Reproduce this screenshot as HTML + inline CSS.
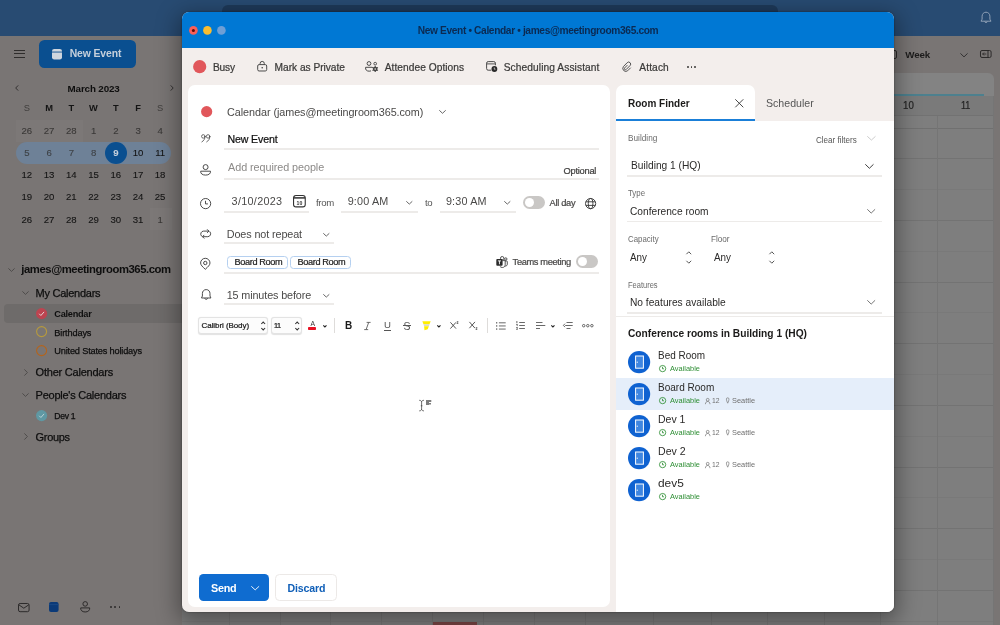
<!DOCTYPE html>
<html>
<head>
<meta charset="utf-8">
<title>New Event</title>
<style>
*{box-sizing:border-box;margin:0;padding:0}
html,body{width:1000px;height:625px;overflow:hidden;background:#797574;font-family:"Liberation Sans",sans-serif;}
body{position:relative}
.a{position:absolute}
.t{position:absolute;white-space:nowrap;line-height:1}
.b{font-weight:bold}
svg{position:absolute;overflow:visible}
/* ---------- background app (dimmed) ---------- */
#topbar{left:0;top:0;width:1000px;height:36px;background:#284b72}
#search{left:222px;top:5px;width:556px;height:26px;border-radius:6px;background:#1e3a5a}
#side{left:0;top:36px;width:182px;height:589px;background:#797574}
#grid{left:182px;top:73px;width:812px;height:552px;background:#7e7e7e;border-top-right-radius:8px}
.dk{color:#0e0e0e;-webkit-text-stroke:0.25px #0e0e0e}
.b.dk{-webkit-text-stroke:0}
.dg{color:#3c3a39}
/* ---------- modal ---------- */
#shadow{left:182px;top:12px;width:712px;height:600px;border-radius:7px;box-shadow:0 6px 22px 4px rgba(0,0,0,.36),0 0 2px rgba(0,0,0,.45)}
#modal{left:182px;top:12px;width:712px;height:600px;border-radius:7px;background:#f3eeec;overflow:hidden}
#title{left:0;top:0;width:712px;height:36.2px;background:#0078d4}
#lp{left:6px;top:73px;width:422px;height:522px;background:#fff;border-radius:7px}
#rp{left:434px;top:109px;width:278px;height:491px;background:#fff}
#tab{left:434px;top:73px;width:139px;height:36px;background:#fff;border-radius:7px 7px 0 0}
.ul{position:absolute;height:1px;background:#e3e1df}
.tb{color:#3b3a39;font-size:10.2px}
.lbl{color:#6b6b6b;font-size:8.4px}
.val{color:#2b2a29;font-size:10.9px}
.fv{color:#4a4948;font-size:10.8px}
</style>
</head>
<body>
<div id="all" class="a" style="left:0;top:0;width:1000px;height:625px;overflow:hidden;will-change:transform">
<!-- ======= dimmed background app ======= -->
<div id="topbar" class="a"></div>
<div id="search" class="a"></div>
<div id="side" class="a"></div>
<div id="grid" class="a"></div>
<svg style="left:980px;top:11px;" width="12" height="13" viewBox="0 0 12 13"><path d="M6 1.2c-2.3 0-3.9 1.8-3.9 4v3L1 10.2h10L9.9 8.2v-3c0-2.2-1.6-4-3.9-4z" fill="none" stroke="#8fa0b6" stroke-width="1"/><path d="M4.6 10.6a1.5 1.5 0 0 0 2.8 0" fill="none" stroke="#8fa0b6" stroke-width="1"/></svg><div class="a" style="left:14px;top:49.7px;width:11px;height:1px;background:#2f2d2c"></div><div class="a" style="left:14px;top:53.4px;width:11px;height:1px;background:#2f2d2c"></div><div class="a" style="left:14px;top:57.0px;width:11px;height:1px;background:#2f2d2c"></div><div class="a" style="left:39px;top:40px;width:96.5px;height:28px;background:#0a4f90;border-radius:5.5px"></div><svg style="left:52px;top:49px;" width="10" height="10.4" viewBox="0 0 10 10.4"><rect x="0" y="0" width="10" height="10.4" rx="2.2" fill="#cfd6de"/><rect x="0" y="2.6" width="10" height="0.9" fill="#0a4f90"/></svg><span class="t b" style="letter-spacing:-0.105px;left:69.7px;top:54.30px;transform:translateY(-50%);font-size:10.4px;color:#c5d0dc">New Event</span><span class="t b dk" style="letter-spacing:-0.138px;left:93.6px;top:88.60px;transform:translate(-50%,-50%);font-size:9.8px">March 2023</span><svg style="left:14.5px;top:85px;" width="4" height="6" viewBox="0 0 4 6"><path d="M3.2 0.4L0.7 3l2.5 2.6" fill="none" stroke="#2b2929" stroke-width="0.9"/></svg><svg style="left:169.5px;top:85px;" width="4" height="6" viewBox="0 0 4 6"><path d="M0.7 0.4L3.2 3 0.7 5.6" fill="none" stroke="#2b2929" stroke-width="0.9"/></svg><span class="t " style="left:26.8px;top:108.70px;transform:translate(-50%,-50%);font-size:9.3px;color:#3f3d3c">S</span><span class="t b" style="left:49px;top:108.70px;transform:translate(-50%,-50%);font-size:9.3px;color:#141414">M</span><span class="t b" style="left:71.3px;top:108.70px;transform:translate(-50%,-50%);font-size:9.3px;color:#141414">T</span><span class="t b" style="left:93.5px;top:108.70px;transform:translate(-50%,-50%);font-size:9.3px;color:#141414">W</span><span class="t b" style="left:115.8px;top:108.70px;transform:translate(-50%,-50%);font-size:9.3px;color:#141414">T</span><span class="t b" style="left:138px;top:108.70px;transform:translate(-50%,-50%);font-size:9.3px;color:#141414">F</span><span class="t " style="left:160.1px;top:108.70px;transform:translate(-50%,-50%);font-size:9.3px;color:#3f3d3c">S</span><div class="a" style="left:16.4px;top:119.5px;width:66.6px;height:22.3px;background:#7c7877"></div><div class="a" style="left:149.5px;top:208.4px;width:22px;height:22px;background:#7c7877"></div><div class="a" style="left:16.4px;top:141.8px;width:155px;height:22px;background:#6e8197;border-radius:11px"></div><div class="a" style="left:104.8px;top:141.8px;width:22px;height:22px;background:#0a4f90;border-radius:11px"></div><span class="t " style="left:26.8px;top:130.70px;transform:translate(-50%,-50%);font-size:9.6px;color:#3a3837;letter-spacing:-0.1px;-webkit-text-stroke:0.1px #3a3837">26</span><span class="t " style="left:49px;top:130.70px;transform:translate(-50%,-50%);font-size:9.6px;color:#3a3837;letter-spacing:-0.1px;-webkit-text-stroke:0.1px #3a3837">27</span><span class="t " style="left:71.3px;top:130.70px;transform:translate(-50%,-50%);font-size:9.6px;color:#3a3837;letter-spacing:-0.1px;-webkit-text-stroke:0.1px #3a3837">28</span><span class="t " style="left:93.5px;top:130.70px;transform:translate(-50%,-50%);font-size:9.6px;color:#3a3837;letter-spacing:-0.1px;-webkit-text-stroke:0.1px #3a3837">1</span><span class="t " style="left:115.8px;top:130.70px;transform:translate(-50%,-50%);font-size:9.6px;color:#3a3837;letter-spacing:-0.1px;-webkit-text-stroke:0.1px #3a3837">2</span><span class="t " style="left:138px;top:130.70px;transform:translate(-50%,-50%);font-size:9.6px;color:#3a3837;letter-spacing:-0.1px;-webkit-text-stroke:0.1px #3a3837">3</span><span class="t " style="left:160.1px;top:130.70px;transform:translate(-50%,-50%);font-size:9.6px;color:#3a3837;letter-spacing:-0.1px;-webkit-text-stroke:0.1px #3a3837">4</span><span class="t " style="left:26.8px;top:152.90px;transform:translate(-50%,-50%);font-size:9.6px;color:#3e4246;letter-spacing:-0.1px;-webkit-text-stroke:0.1px #3e4246">5</span><span class="t " style="left:49px;top:152.90px;transform:translate(-50%,-50%);font-size:9.6px;color:#3e4246;letter-spacing:-0.1px;-webkit-text-stroke:0.1px #3e4246">6</span><span class="t " style="left:71.3px;top:152.90px;transform:translate(-50%,-50%);font-size:9.6px;color:#3e4246;letter-spacing:-0.1px;-webkit-text-stroke:0.1px #3e4246">7</span><span class="t " style="left:93.5px;top:152.90px;transform:translate(-50%,-50%);font-size:9.6px;color:#3e4246;letter-spacing:-0.1px;-webkit-text-stroke:0.1px #3e4246">8</span><span class="t b" style="left:115.8px;top:152.90px;transform:translate(-50%,-50%);font-size:9.6px;color:#c5d0dc;letter-spacing:-0.1px;-webkit-text-stroke:0.1px #c5d0dc">9</span><span class="t " style="left:138px;top:152.90px;transform:translate(-50%,-50%);font-size:9.6px;color:#141414;letter-spacing:-0.1px;-webkit-text-stroke:0.1px #141414">10</span><span class="t " style="left:160.1px;top:152.90px;transform:translate(-50%,-50%);font-size:9.6px;color:#141414;letter-spacing:-0.1px;-webkit-text-stroke:0.1px #141414">11</span><span class="t " style="left:26.8px;top:175.10px;transform:translate(-50%,-50%);font-size:9.6px;color:#141414;letter-spacing:-0.1px;-webkit-text-stroke:0.1px #141414">12</span><span class="t " style="left:49px;top:175.10px;transform:translate(-50%,-50%);font-size:9.6px;color:#141414;letter-spacing:-0.1px;-webkit-text-stroke:0.1px #141414">13</span><span class="t " style="left:71.3px;top:175.10px;transform:translate(-50%,-50%);font-size:9.6px;color:#141414;letter-spacing:-0.1px;-webkit-text-stroke:0.1px #141414">14</span><span class="t " style="left:93.5px;top:175.10px;transform:translate(-50%,-50%);font-size:9.6px;color:#141414;letter-spacing:-0.1px;-webkit-text-stroke:0.1px #141414">15</span><span class="t " style="left:115.8px;top:175.10px;transform:translate(-50%,-50%);font-size:9.6px;color:#141414;letter-spacing:-0.1px;-webkit-text-stroke:0.1px #141414">16</span><span class="t " style="left:138px;top:175.10px;transform:translate(-50%,-50%);font-size:9.6px;color:#141414;letter-spacing:-0.1px;-webkit-text-stroke:0.1px #141414">17</span><span class="t " style="left:160.1px;top:175.10px;transform:translate(-50%,-50%);font-size:9.6px;color:#141414;letter-spacing:-0.1px;-webkit-text-stroke:0.1px #141414">18</span><span class="t " style="left:26.8px;top:197.40px;transform:translate(-50%,-50%);font-size:9.6px;color:#141414;letter-spacing:-0.1px;-webkit-text-stroke:0.1px #141414">19</span><span class="t " style="left:49px;top:197.40px;transform:translate(-50%,-50%);font-size:9.6px;color:#141414;letter-spacing:-0.1px;-webkit-text-stroke:0.1px #141414">20</span><span class="t " style="left:71.3px;top:197.40px;transform:translate(-50%,-50%);font-size:9.6px;color:#141414;letter-spacing:-0.1px;-webkit-text-stroke:0.1px #141414">21</span><span class="t " style="left:93.5px;top:197.40px;transform:translate(-50%,-50%);font-size:9.6px;color:#141414;letter-spacing:-0.1px;-webkit-text-stroke:0.1px #141414">22</span><span class="t " style="left:115.8px;top:197.40px;transform:translate(-50%,-50%);font-size:9.6px;color:#141414;letter-spacing:-0.1px;-webkit-text-stroke:0.1px #141414">23</span><span class="t " style="left:138px;top:197.40px;transform:translate(-50%,-50%);font-size:9.6px;color:#141414;letter-spacing:-0.1px;-webkit-text-stroke:0.1px #141414">24</span><span class="t " style="left:160.1px;top:197.40px;transform:translate(-50%,-50%);font-size:9.6px;color:#141414;letter-spacing:-0.1px;-webkit-text-stroke:0.1px #141414">25</span><span class="t " style="left:26.8px;top:219.60px;transform:translate(-50%,-50%);font-size:9.6px;color:#141414;letter-spacing:-0.1px;-webkit-text-stroke:0.1px #141414">26</span><span class="t " style="left:49px;top:219.60px;transform:translate(-50%,-50%);font-size:9.6px;color:#141414;letter-spacing:-0.1px;-webkit-text-stroke:0.1px #141414">27</span><span class="t " style="left:71.3px;top:219.60px;transform:translate(-50%,-50%);font-size:9.6px;color:#141414;letter-spacing:-0.1px;-webkit-text-stroke:0.1px #141414">28</span><span class="t " style="left:93.5px;top:219.60px;transform:translate(-50%,-50%);font-size:9.6px;color:#141414;letter-spacing:-0.1px;-webkit-text-stroke:0.1px #141414">29</span><span class="t " style="left:115.8px;top:219.60px;transform:translate(-50%,-50%);font-size:9.6px;color:#141414;letter-spacing:-0.1px;-webkit-text-stroke:0.1px #141414">30</span><span class="t " style="left:138px;top:219.60px;transform:translate(-50%,-50%);font-size:9.6px;color:#141414;letter-spacing:-0.1px;-webkit-text-stroke:0.1px #141414">31</span><span class="t " style="left:160.1px;top:219.60px;transform:translate(-50%,-50%);font-size:9.6px;color:#3a3837;letter-spacing:-0.1px;-webkit-text-stroke:0.1px #3a3837">1</span><svg style="left:7.6px;top:268.2px;" width="7" height="4" viewBox="0 0 7 4"><path d="M0.4 0.4L3.5 3.4 6.6 0.4" fill="none" stroke="#4a4746" stroke-width="0.9"/></svg><span class="t b dk" style="letter-spacing:-0.435px;left:21.3px;top:270.00px;transform:translateY(-50%);font-size:11.3px">james@meetingroom365.com</span><svg style="left:21.5px;top:291px;" width="7" height="4" viewBox="0 0 7 4"><path d="M0.4 0.4L3.5 3.4 6.6 0.4" fill="none" stroke="#4a4746" stroke-width="0.9"/></svg><span class="t dk" style="letter-spacing:-0.263px;left:35.6px;top:292.80px;transform:translateY(-50%);font-size:11px">My Calendars</span><div class="a" style="left:4px;top:304.1px;width:178px;height:18.8px;background:#6e6b6a;border-radius:4px 0 0 4px"></div><svg style="left:36px;top:307.7px;" width="11.2" height="11.2" viewBox="0 0 11.2 11.2"><circle cx="5.6" cy="5.6" r="5.6" fill="#bd4450"/><path d="M3.2 5.8l1.7 1.7 3.2-3.6" fill="none" stroke="#e6d6d6" stroke-width="1"/></svg><span class="t b dk" style="letter-spacing:-0.266px;left:54.3px;top:315.10px;transform:translateY(-50%);font-size:9.2px">Calendar</span><svg style="left:36px;top:326.3px;" width="11.2" height="11.2" viewBox="0 0 11.2 11.2"><circle cx="5.6" cy="5.6" r="5" fill="none" stroke="#b79a3d" stroke-width="1.1"/></svg><span class="t dk" style="letter-spacing:-0.146px;left:54.3px;top:333.50px;transform:translateY(-50%);font-size:9.2px">Birthdays</span><svg style="left:36px;top:344.7px;" width="11.2" height="11.2" viewBox="0 0 11.2 11.2"><circle cx="5.6" cy="5.6" r="5" fill="none" stroke="#b4641c" stroke-width="1.1"/></svg><span class="t dk" style="letter-spacing:-0.174px;left:54.3px;top:352.40px;transform:translateY(-50%);font-size:9.2px">United States holidays</span><svg style="left:23.6px;top:368.5px;" width="4" height="7" viewBox="0 0 4 7"><path d="M0.4 0.4L3.4 3.5 0.4 6.6" fill="none" stroke="#4a4746" stroke-width="0.9"/></svg><span class="t dk" style="letter-spacing:-0.221px;left:35.6px;top:372.00px;transform:translateY(-50%);font-size:11px">Other Calendars</span><svg style="left:21.5px;top:393px;" width="7" height="4" viewBox="0 0 7 4"><path d="M0.4 0.4L3.5 3.4 6.6 0.4" fill="none" stroke="#4a4746" stroke-width="0.9"/></svg><span class="t dk" style="letter-spacing:-0.247px;left:35.6px;top:394.80px;transform:translateY(-50%);font-size:11px">People's Calendars</span><svg style="left:36px;top:409.6px;" width="11.2" height="11.2" viewBox="0 0 11.2 11.2"><circle cx="5.6" cy="5.6" r="5.6" fill="#5f98a3"/><path d="M3.2 5.8l1.7 1.7 3.2-3.6" fill="none" stroke="#b9d0d4" stroke-width="1"/></svg><span class="t dk" style="letter-spacing:-0.291px;left:54.3px;top:415.80px;transform:translateY(-50%);font-size:8.6px">Dev 1</span><svg style="left:23.6px;top:433px;" width="4" height="7" viewBox="0 0 4 7"><path d="M0.4 0.4L3.4 3.5 0.4 6.6" fill="none" stroke="#4a4746" stroke-width="0.9"/></svg><span class="t dk" style="letter-spacing:-0.313px;left:35.6px;top:436.50px;transform:translateY(-50%);font-size:11px">Groups</span><svg style="left:17.8px;top:602.5px;" width="11.6" height="9.2" viewBox="0 0 11.6 9.2"><rect x="0.5" y="0.5" width="10.6" height="8.2" rx="1.6" fill="none" stroke="#2c2a2a" stroke-width="1"/><path d="M0.8 1.8L5.8 5.2 10.8 1.8" fill="none" stroke="#2c2a2a" stroke-width="1"/></svg><svg style="left:49.3px;top:601.8px;" width="9.6" height="9.9" viewBox="0 0 9.6 9.9"><rect x="0" y="0" width="9.6" height="9.9" rx="2" fill="#0b3a78"/><rect x="0" y="2.3" width="9.6" height="0.8" fill="#1d4c88"/></svg><svg style="left:79.6px;top:601px;" width="10.4" height="11.6" viewBox="0 0 10.4 11.6"><circle cx="5.2" cy="2.9" r="2.3" fill="none" stroke="#2c2a2a" stroke-width="1"/><path d="M0.7 6.9h9c0.3 2.2-1.4 4.1-4.5 4.1S0.4 9.1 0.7 6.9z" fill="none" stroke="#2c2a2a" stroke-width="1"/></svg><div class="a" style="left:110.2px;top:606.2px;width:1.6px;height:1.6px;background:#2c2a2a;border-radius:1px"></div><div class="a" style="left:114.4px;top:606.2px;width:1.6px;height:1.6px;background:#2c2a2a;border-radius:1px"></div><div class="a" style="left:118.5px;top:606.2px;width:1.6px;height:1.6px;background:#2c2a2a;border-radius:1px"></div><svg style="left:889px;top:50px;" width="8" height="9" viewBox="0 0 8 9"><rect x="0.5" y="0.5" width="7" height="8" rx="1.5" fill="none" stroke="#2c2a2a" stroke-width="1"/></svg><span class="t b" style="letter-spacing:-0.105px;left:905.2px;top:54.60px;transform:translateY(-50%);font-size:9.8px;color:#1d1c1c">Week</span><svg style="left:960.2px;top:52.8px;" width="8" height="4.4" viewBox="0 0 8 4.4"><path d="M0.4 0.4L4 3.9 7.6 0.4" fill="none" stroke="#2c2a2a" stroke-width="0.9"/></svg><svg style="left:980.2px;top:50.4px;" width="11.6" height="8" viewBox="0 0 11.6 8"><rect x="0.5" y="0.5" width="10.6" height="7" rx="1.5" fill="none" stroke="#2c2a2a" stroke-width="1"/><path d="M8 0.5v7" stroke="#2c2a2a" stroke-width="1"/><path d="M6.3 4H2.6M4 2.6L2.6 4 4 5.4" fill="none" stroke="#2c2a2a" stroke-width="0.9"/></svg><div class="a" style="left:182px;top:72.5px;width:812px;height:23px;background:#838383;border-top-right-radius:6px"></div><div class="a" style="left:182px;top:96px;width:812px;height:20px;background:#7a7a7a"></div><div class="a" style="left:182px;top:94.2px;width:802px;height:2px;background:#4d808e"></div><div class="a" style="left:182px;top:115.3px;width:812px;height:1px;background:#727272"></div><div class="a" style="left:182px;top:128px;width:812px;height:1.2px;background:#707070"></div><div class="a" style="left:182px;top:158.3px;width:812px;height:1px;background:#737373"></div><div class="a" style="left:182px;top:189.13px;width:812px;height:1px;background:#797979"></div><div class="a" style="left:182px;top:219.95999999999998px;width:812px;height:1px;background:#737373"></div><div class="a" style="left:182px;top:250.78999999999996px;width:812px;height:1px;background:#797979"></div><div class="a" style="left:182px;top:281.61999999999995px;width:812px;height:1px;background:#737373"></div><div class="a" style="left:182px;top:312.44999999999993px;width:812px;height:1px;background:#797979"></div><div class="a" style="left:182px;top:343.2799999999999px;width:812px;height:1px;background:#737373"></div><div class="a" style="left:182px;top:374.1099999999999px;width:812px;height:1px;background:#797979"></div><div class="a" style="left:182px;top:404.9399999999999px;width:812px;height:1px;background:#737373"></div><div class="a" style="left:182px;top:435.76999999999987px;width:812px;height:1px;background:#797979"></div><div class="a" style="left:182px;top:466.59999999999985px;width:812px;height:1px;background:#737373"></div><div class="a" style="left:182px;top:497.42999999999984px;width:812px;height:1px;background:#797979"></div><div class="a" style="left:182px;top:528.2599999999999px;width:812px;height:1px;background:#737373"></div><div class="a" style="left:182px;top:559.0899999999999px;width:812px;height:1px;background:#797979"></div><div class="a" style="left:182px;top:589.92px;width:812px;height:1px;background:#737373"></div><div class="a" style="left:182px;top:620.75px;width:812px;height:1px;background:#797979"></div><div class="a" style="left:229.1px;top:116px;width:1px;height:509px;background:#757575"></div><div class="a" style="left:279.7px;top:116px;width:1px;height:509px;background:#757575"></div><div class="a" style="left:330.4px;top:116px;width:1px;height:509px;background:#757575"></div><div class="a" style="left:381.1px;top:116px;width:1px;height:509px;background:#757575"></div><div class="a" style="left:431.8px;top:116px;width:1px;height:509px;background:#757575"></div><div class="a" style="left:483.1px;top:116px;width:1px;height:509px;background:#757575"></div><div class="a" style="left:533.9px;top:116px;width:1px;height:509px;background:#757575"></div><div class="a" style="left:584.5px;top:116px;width:1px;height:509px;background:#757575"></div><div class="a" style="left:652.5px;top:116px;width:1px;height:509px;background:#757575"></div><div class="a" style="left:710.5px;top:116px;width:1px;height:509px;background:#757575"></div><div class="a" style="left:766.8px;top:116px;width:1px;height:509px;background:#757575"></div><div class="a" style="left:823.5px;top:116px;width:1px;height:509px;background:#757575"></div><div class="a" style="left:879.8px;top:116px;width:1px;height:509px;background:#757575"></div><div class="a" style="left:936.8px;top:116px;width:1px;height:509px;background:#757575"></div><div class="a" style="left:993.2px;top:96px;width:1px;height:529px;background:#757575"></div><span class="t " style="left:903px;top:106.20px;transform:translateY(-50%) scaleX(0.9341);transform-origin:0 50%;font-size:10.4px;color:#232323;-webkit-text-stroke:0.2px #232323">10</span><span class="t " style="left:961.3px;top:106.20px;transform:translateY(-50%) scaleX(0.8706);transform-origin:0 50%;font-size:10.4px;color:#232323;-webkit-text-stroke:0.2px #232323">11</span><div class="a" style="left:433px;top:622px;width:44px;height:3px;background:#7a4544"></div>
<!-- ======= modal ======= -->
<div id="shadow" class="a"></div>
<div id="modal" class="a">
  <div id="title" class="a"></div>
  <div id="lp" class="a"></div>
  <div id="tab" class="a"></div>
  <div id="rp" class="a"></div>
</div>
<svg style="left:189.3px;top:26px;" width="9" height="9" viewBox="0 0 9 9"><circle cx="4.4" cy="4.4" r="4.3" fill="#fb5f58"/><circle cx="4.4" cy="4.4" r="1.5" fill="#5c0c0a"/></svg><svg style="left:203.4px;top:26px;" width="9" height="9" viewBox="0 0 9 9"><circle cx="4.4" cy="4.4" r="4.3" fill="#fbbd2e"/></svg><svg style="left:217.2px;top:26px;" width="9" height="9" viewBox="0 0 9 9"><circle cx="4.4" cy="4.4" r="4.3" fill="#6f9fd5"/></svg><span class="t b" style="letter-spacing:-0.366px;left:538px;top:31.20px;transform:translate(-50%,-50%);font-size:10.2px;color:#0b2a52">New Event &bull; Calendar &bull; james@meetingroom365.com</span><svg style="left:193.3px;top:60.1px;" width="13.4" height="13.4" viewBox="0 0 13.4 13.4"><circle cx="6.7" cy="6.7" r="6.6" fill="#e1575b"/></svg><span class="t tb" style="letter-spacing:-0.214px;left:213px;top:67.70px;transform:translateY(-50%);-webkit-text-stroke:0.22px currentColor;">Busy</span><svg style="left:256.5px;top:60.9px;" width="10.4" height="10.6" viewBox="0 0 10.4 10.6"><rect x="0.7" y="3.6" width="9" height="6.4" rx="1.4" fill="none" stroke="#424242" stroke-width="0.95"/><path d="M3.1 3.6V2.5a2.1 2.1 0 0 1 4.2 0v1.1" fill="none" stroke="#424242" stroke-width="0.95"/><circle cx="5.2" cy="6.8" r="0.8" fill="#424242"/></svg><span class="t tb" style="letter-spacing:-0.031px;left:274.6px;top:67.60px;transform:translateY(-50%);-webkit-text-stroke:0.22px currentColor;">Mark as Private</span><svg style="left:365px;top:60.9px;" width="13.4" height="10.8" viewBox="0 0 13.4 10.8"><circle cx="4" cy="2.5" r="1.9" fill="none" stroke="#424242" stroke-width="0.95"/><path d="M0.6 6.3h6.6c0.3 0 0.5 0.3 0.4 0.7M0.6 6.3c-0.4 2.6 1.2 3.9 3.6 3.9 0.7 0 1.3-0.1 1.8-0.3" fill="none" stroke="#424242" stroke-width="0.95"/><circle cx="10.2" cy="2.7" r="1.35" fill="none" stroke="#424242" stroke-width="0.9"/><circle cx="10.2" cy="8" r="2.2" fill="#424242"/><g stroke="#424242" stroke-width="1.1"><path d="M10.2 4.9v6.2M7.5 6.45l5.4 3.1M7.5 9.55l5.4-3.1"/></g><circle cx="10.2" cy="8" r="0.8" fill="#f3eeec"/></svg><span class="t tb" style="letter-spacing:0.048px;left:384.7px;top:67.60px;transform:translateY(-50%);-webkit-text-stroke:0.22px currentColor;">Attendee Options</span><svg style="left:485.8px;top:61.2px;" width="11.6" height="11" viewBox="0 0 11.6 11"><path d="M9.4 4.3V2.2A1.6 1.6 0 0 0 7.8 0.6H2.2A1.6 1.6 0 0 0 0.6 2.2v5.4a1.6 1.6 0 0 0 1.6 1.6h3" fill="none" stroke="#424242" stroke-width="0.95"/><path d="M0.6 2.9h8.8" stroke="#424242" stroke-width="0.9"/><circle cx="8.4" cy="8" r="2.9" fill="#2b2b2b"/><path d="M8.3 6.5v1.7h1.2" fill="none" stroke="#f3eeec" stroke-width="0.7"/></svg><span class="t tb" style="letter-spacing:0.089px;left:503.7px;top:67.60px;transform:translateY(-50%);-webkit-text-stroke:0.22px currentColor;">Scheduling Assistant</span><svg style="left:622.1px;top:62px;" width="10" height="9.8" viewBox="0 0 10 9.8"><path d="M5.1 3.4L2.6 6a1.1 1.1 0 0 0 1.6 1.5l3.9-4a2 2 0 0 0-2.9-2.8L1.4 4.6a3 3 0 0 0 4.2 4.2L8.4 6" fill="none" stroke="#424242" stroke-width="0.9" stroke-linecap="round"/></svg><span class="t tb" style="letter-spacing:0.118px;left:639.3px;top:67.60px;transform:translateY(-50%);-webkit-text-stroke:0.22px currentColor;">Attach</span><div class="a" style="left:686.9499999999999px;top:66px;width:1.7px;height:1.7px;background:#3b3a39;border-radius:1px"></div><div class="a" style="left:690.65px;top:66px;width:1.7px;height:1.7px;background:#3b3a39;border-radius:1px"></div><div class="a" style="left:694.25px;top:66px;width:1.7px;height:1.7px;background:#3b3a39;border-radius:1px"></div><svg style="left:201.2px;top:105.9px;" width="11.3" height="11.3" viewBox="0 0 11.3 11.3"><circle cx="5.65" cy="5.65" r="5.6" fill="#e1575b"/></svg><span class="t fv" style="letter-spacing:-0.057px;left:227.1px;top:111.60px;transform:translateY(-50%);">Calendar (james@meetingroom365.com)</span><svg style="left:438.5px;top:110.0px;" width="7" height="3.6" viewBox="0 0 7 3.6"><path d="M0.3 0.3L3.50 3.30 6.70 0.3" fill="none" stroke="#555" stroke-width="0.9"/></svg><svg style="left:200.9px;top:134px;" width="9.6" height="8.4" viewBox="0 0 9.6 8.4"><g fill="none" stroke="#4a4a4a" stroke-width="0.8" stroke-linecap="round"><circle cx="2.3" cy="2.4" r="1.75"/><path d="M4.050 2.500C4.050 4.900 2.900 6.700 0.900 7.900"/><circle cx="7.1" cy="2.4" r="1.75"/><path d="M8.850 2.500C8.850 4.900 7.700 6.700 5.700 7.900"/></g></svg><span class="t " style="letter-spacing:-0.115px;left:227.4px;top:138.70px;transform:translateY(-50%);font-size:10.6px;color:#111;-webkit-text-stroke:0.22px currentColor;">New Event</span><div class="a" style="left:223.7px;top:148.2px;width:375.3px;height:1.5px;background:#edebe9"></div><svg style="left:200.2px;top:164.4px;" width="11.2" height="11.6" viewBox="0 0 11.2 11.6"><circle cx="5.6" cy="3.1" r="2.5" fill="none" stroke="#424242" stroke-width="0.95"/><path d="M0.7 7.2h9.8c0.3 2.4-1.6 3.9-4.9 3.9S0.4 9.6 0.7 7.2z" fill="none" stroke="#424242" stroke-width="0.95"/></svg><span class="t " style="letter-spacing:-0.066px;left:228.1px;top:167.40px;transform:translateY(-50%);font-size:10.8px;color:#8c8a88">Add required people</span><span class="t " style="letter-spacing:-0.243px;left:563.5px;top:171.50px;transform:translateY(-50%);font-size:9.3px;color:#3f3e3d;-webkit-text-stroke:0.22px currentColor;">Optional</span><div class="a" style="left:223.7px;top:178.3px;width:375.3px;height:1.5px;background:#edebe9"></div><svg style="left:199.8px;top:197.5px;" width="11.2" height="11.2" viewBox="0 0 11.2 11.2"><circle cx="5.6" cy="5.6" r="5.1" fill="none" stroke="#424242" stroke-width="0.95"/><path d="M5.5 2.8v3.1h2.4" fill="none" stroke="#424242" stroke-width="0.95"/></svg><span class="t fv" style="letter-spacing:0.306px;left:231.6px;top:201.30px;transform:translateY(-50%);">3/10/2023</span><svg style="left:293.4px;top:194.6px;" width="12.8" height="12.4" viewBox="0 0 12.8 12.4"><rect x="0.55" y="0.55" width="11.7" height="11.3" rx="2.4" fill="none" stroke="#333" stroke-width="1.1"/><path d="M0.6 2.9h11.6" stroke="#333" stroke-width="1.5"/><text x="6.4" y="9.6" font-size="5.2" font-weight="bold" text-anchor="middle" fill="#333" font-family="Liberation Sans">10</text></svg><div class="a" style="left:223.7px;top:211.2px;width:85.0px;height:1.5px;background:#edebe9"></div><span class="t " style="letter-spacing:-0.297px;left:316px;top:203.20px;transform:translateY(-50%);font-size:9.6px;color:#555">from</span><span class="t fv" style="letter-spacing:0.168px;left:347.7px;top:201.30px;transform:translateY(-50%);">9:00 AM</span><svg style="left:406.3px;top:200.70000000000002px;" width="6.6" height="3.4" viewBox="0 0 6.6 3.4"><path d="M0.3 0.3L3.30 3.10 6.30 0.3" fill="none" stroke="#555" stroke-width="0.9"/></svg><div class="a" style="left:341.3px;top:211.2px;width:76.30000000000001px;height:1.5px;background:#edebe9"></div><span class="t " style="letter-spacing:-0.408px;left:425px;top:203.20px;transform:translateY(-50%);font-size:9.6px;color:#555">to</span><span class="t fv" style="letter-spacing:0.168px;left:445.9px;top:201.30px;transform:translateY(-50%);">9:30 AM</span><svg style="left:504.09999999999997px;top:200.70000000000002px;" width="6.6" height="3.4" viewBox="0 0 6.6 3.4"><path d="M0.3 0.3L3.30 3.10 6.30 0.3" fill="none" stroke="#555" stroke-width="0.9"/></svg><div class="a" style="left:439.7px;top:211.2px;width:75.90000000000003px;height:1.5px;background:#edebe9"></div><div class="a" style="left:522.8px;top:195.9px;width:22.2px;height:13.1px;background:#c9c7c5;border-radius:6.6px"></div><div class="a" style="left:524.7px;top:197.7px;width:9.6px;height:9.6px;background:#fff;border-radius:5px"></div><span class="t " style="letter-spacing:-0.301px;left:549.5px;top:203.90px;transform:translateY(-50%);font-size:9.3px;color:#4a4948;-webkit-text-stroke:0.22px currentColor;">All day</span><svg style="left:585.2px;top:197.8px;" width="11.2" height="11.2" viewBox="0 0 11.2 11.2"><g fill="none" stroke="#333" stroke-width="0.9"><circle cx="5.6" cy="5.6" r="5.1"/><ellipse cx="5.6" cy="5.6" rx="2.3" ry="5.1"/><path d="M0.9 3.8h9.4M0.9 7.4h9.4"/></g></svg><svg style="left:200px;top:229.4px;" width="11.4" height="9.8" viewBox="0 0 11.4 9.8"><g fill="none" stroke="#424242" stroke-width="0.95" stroke-linecap="round" stroke-linejoin="round"><path d="M7.4 0.6l1.5 1.5-1.5 1.5"/><path d="M8.7 2.1H3.6A3 3 0 0 0 1.4 7"/><path d="M4 9.2L2.5 7.7 4 6.2"/><path d="M2.7 7.7h5.1A3 3 0 0 0 10 2.8"/></g></svg><span class="t fv" style="letter-spacing:-0.102px;left:226.7px;top:233.80px;transform:translateY(-50%);">Does not repeat</span><svg style="left:323.0px;top:232.9px;" width="6.6" height="3.4" viewBox="0 0 6.6 3.4"><path d="M0.3 0.3L3.30 3.10 6.30 0.3" fill="none" stroke="#555" stroke-width="0.9"/></svg><div class="a" style="left:223.7px;top:242.2px;width:110.5px;height:1.5px;background:#edebe9"></div><svg style="left:200.4px;top:258.4px;" width="10.6" height="12" viewBox="0 0 10.6 12"><g fill="none" stroke="#424242" stroke-width="0.95"><path d="M5.3 11.3C2.6 8.8 0.6 7 0.6 5a4.7 4.7 0 0 1 9.4 0c0 2-2 3.800-4.700 6.300z"/><circle cx="5.3" cy="5" r="1.7"/></g></svg><div class="a" style="left:227px;top:256px;width:60.6px;height:13px;border:1px solid #b5d0f0;border-radius:3.5px;background:#fff"></div><span class="t " style="letter-spacing:-0.398px;left:234.6px;top:262.50px;transform:translateY(-50%);font-size:9.2px;color:#1f1f1f;-webkit-text-stroke:0.22px currentColor;">Board Room</span><div class="a" style="left:290.2px;top:256px;width:60.6px;height:13px;border:1px solid #b5d0f0;border-radius:3.5px;background:#fff"></div><span class="t " style="letter-spacing:-0.398px;left:297.6px;top:262.50px;transform:translateY(-50%);font-size:9.2px;color:#1f1f1f;-webkit-text-stroke:0.22px currentColor;">Board Room</span><svg style="left:496.3px;top:256px;" width="11.8" height="12" viewBox="0 0 11.8 12"><g fill="none" stroke="#2b2b2b" stroke-width="0.8"><circle cx="6.2" cy="2.2" r="1.7"/><circle cx="9.8" cy="3" r="1.2"/><path d="M6.6 4.6h2.6v4.2c0 1.700-1.300 2.700-2.900 2.700-1 0-1.900-0.400-2.400-1.200"/><path d="M9.200 5h1.500c0.400 0 0.600 0.200 0.600 0.600v2.500c0 1.300-0.900 2-2.100 2.100"/></g><rect x="0.300" y="3.1" width="6.300" height="6.600" rx="0.900" fill="#2b2b2b"/><path d="M1.900 4.900h3.100M3.450 4.900v3.400" stroke="#fff" stroke-width="0.9"/></svg><span class="t " style="letter-spacing:-0.365px;left:512.6px;top:263.10px;transform:translateY(-50%);font-size:9.3px;color:#4a4948;-webkit-text-stroke:0.22px currentColor;">Teams meeting</span><div class="a" style="left:575.9px;top:254.9px;width:22px;height:13px;background:#c9c7c5;border-radius:6.5px"></div><div class="a" style="left:577.8px;top:256.7px;width:9.5px;height:9.5px;background:#fff;border-radius:5px"></div><div class="a" style="left:223.7px;top:272.3px;width:375.3px;height:1.5px;background:#edebe9"></div><svg style="left:200.5px;top:289.4px;" width="10.4" height="11.6" viewBox="0 0 10.4 11.6"><g fill="none" stroke="#424242" stroke-width="0.95"><path d="M5.200 0.600c-2.300 0-3.800 1.700-3.800 3.900v2.500L0.500 9h9.400l-0.900-2V4.500c0-2.200-1.500-3.900-3.800-3.900z"/><path d="M3.700 9.300a1.600 1.600 0 0 0 3 0"/></g></svg><span class="t fv" style="letter-spacing:-0.120px;left:226.7px;top:295.00px;transform:translateY(-50%);">15 minutes before</span><svg style="left:323.0px;top:294.1px;" width="6.6" height="3.4" viewBox="0 0 6.6 3.4"><path d="M0.3 0.3L3.30 3.10 6.30 0.3" fill="none" stroke="#555" stroke-width="0.9"/></svg><div class="a" style="left:223.7px;top:303.4px;width:110.5px;height:1.5px;background:#edebe9"></div><div class="a" style="left:198.3px;top:317px;width:69.5px;height:16.6px;background:#fcfcfc;border:1px solid #e3e3e3;border-radius:3px;box-shadow:0 0.500px 1px rgba(0,0,0,.12)"></div><span class="t " style="letter-spacing:-0.076px;left:201.6px;top:326.00px;transform:translateY(-50%);font-size:8px;color:#1a1a1a;-webkit-text-stroke:0.22px currentColor;">Calibri (Body)</span><svg style="left:261.2px;top:320.8px;" width="4.4" height="10" viewBox="0 0 4.4 10"><g fill="none" stroke="#333" stroke-width="1.05"><path d="M0.300 3L2.200 1.100 4.100 3"/><path d="M0.300 7L2.200 8.900 4.100 7"/></g></svg><div class="a" style="left:271.3px;top:317px;width:30.6px;height:16.6px;background:#fcfcfc;border:1px solid #e3e3e3;border-radius:3px;box-shadow:0 0.500px 1px rgba(0,0,0,.12)"></div><span class="t " style="letter-spacing:-0.486px;left:274px;top:326.00px;transform:translateY(-50%);font-size:7.4px;color:#1a1a1a;-webkit-text-stroke:0.22px currentColor;">11</span><svg style="left:294.8px;top:320.8px;" width="4.4" height="10" viewBox="0 0 4.4 10"><g fill="none" stroke="#333" stroke-width="1.05"><path d="M0.300 3L2.200 1.100 4.100 3"/><path d="M0.300 7L2.200 8.900 4.100 7"/></g></svg><span class="t " style="left:312.7px;top:323.60px;transform:translate(-50%,-50%);font-size:6.800px;color:#333">A</span><div class="a" style="left:308.3px;top:327.3px;width:8.2px;height:2.5px;background:#e81123;border-radius:0.800px"></div><svg style="left:323.1px;top:324.5px;" width="3.8" height="2.2" viewBox="0 0 3.8 2.2"><path d="M0.3 0.3L1.90 1.90 3.50 0.3" fill="none" stroke="#222" stroke-width="1.1"/></svg><div class="a" style="left:334px;top:317.7px;width:1px;height:15.6px;background:#dedcda"></div><span class="t b" style="left:348.5px;top:325.70px;transform:translate(-50%,-50%);font-size:10px;color:#1a1a1a">B</span><svg style="left:364.4px;top:321.6px;" width="7" height="8" viewBox="0 0 7 8"><path d="M2.600 0.400h4M0.200 7.600h4M4.700 0.400L2.100 7.600" fill="none" stroke="#555" stroke-width="0.850"/></svg><span class="t " style="left:387.5px;top:325.20px;transform:translate(-50%,-50%);font-size:9.600px;color:#555">U</span><div class="a" style="left:384.3px;top:329.6px;width:6.6px;height:0.8px;background:#555"></div><span class="t " style="left:407px;top:325.60px;transform:translate(-50%,-50%);font-size:10.500px;color:#555">S</span><div class="a" style="left:403px;top:325.2px;width:8px;height:0.8px;background:#555"></div><svg style="left:421.9px;top:321.2px;" width="9" height="9.4" viewBox="0 0 9 9.4"><path d="M0.300 0.300h8.400L7.500 3.300h-6z" fill="#ffee00"/><path d="M1.500 3.300h6L6.900 5.300H2.100z" fill="#d8d8c8"/><path d="M2.100 5.300h4.800L5.700 8.300 2.500 9.200z" fill="#ffee00"/></svg><svg style="left:436.90000000000003px;top:324.5px;" width="3.8" height="2.2" viewBox="0 0 3.8 2.2"><path d="M0.3 0.3L1.90 1.90 3.50 0.3" fill="none" stroke="#222" stroke-width="1.1"/></svg><svg style="left:449.8px;top:321.4px;" width="9" height="8" viewBox="0 0 9 8"><path d="M0.400 1.300l5.600 6.300M6 1.300L0.400 7.600" stroke="#444" stroke-width="0.9" fill="none"/><text x="6.600" y="2.900" font-size="3.600" font-weight="bold" fill="#333" font-family="Liberation Sans">2</text></svg><svg style="left:468.8px;top:321.4px;" width="9.4" height="9" viewBox="0 0 9.4 9"><path d="M0.400 0.900l5.600 6.300M6 0.900L0.400 7.200" stroke="#444" stroke-width="0.9" fill="none"/><text x="6.600" y="8.600" font-size="3.600" font-weight="bold" fill="#333" font-family="Liberation Sans">2</text></svg><div class="a" style="left:487px;top:317.7px;width:1px;height:15.6px;background:#dedcda"></div><svg style="left:496.3px;top:321.7px;" width="9.8" height="8" viewBox="0 0 9.8 8"><g fill="#444"><rect x="0" y="0.300" width="1.300" height="1.100"/><rect x="0" y="3.400" width="1.300" height="1.100"/><rect x="0" y="6.500" width="1.300" height="1.100"/><rect x="2.900" y="0.450" width="6.800" height="0.800"/><rect x="2.900" y="3.550" width="6.800" height="0.800"/><rect x="2.900" y="6.650" width="6.800" height="0.800"/></g></svg><svg style="left:516px;top:321.2px;" width="9" height="9" viewBox="0 0 9 9"><g fill="#444"><rect x="0.500" y="0" width="0.800" height="2.200"/><rect x="0.200" y="3.300" width="1.300" height="0.700"/><rect x="0.800" y="3.300" width="0.700" height="1.800"/><rect x="0.200" y="6.300" width="1.300" height="0.700"/><rect x="0.200" y="7.900" width="1.300" height="0.700"/><rect x="0.800" y="6.300" width="0.700" height="2.300"/><rect x="3.200" y="1" width="5.700" height="0.800"/><rect x="3.200" y="4.100" width="5.700" height="0.800"/><rect x="3.200" y="7.200" width="5.700" height="0.800"/></g></svg><svg style="left:535.5px;top:322.1px;" width="9.4" height="7" viewBox="0 0 9.4 7"><g fill="#444"><rect x="0" y="0" width="6.500" height="0.800"/><rect x="0" y="3" width="9.300" height="0.800"/><rect x="0" y="6" width="4" height="0.800"/></g></svg><svg style="left:550.8000000000001px;top:324.5px;" width="3.8" height="2.2" viewBox="0 0 3.8 2.2"><path d="M0.3 0.3L1.90 1.90 3.50 0.3" fill="none" stroke="#222" stroke-width="1.1"/></svg><svg style="left:563.2px;top:322.1px;" width="9.8" height="7" viewBox="0 0 9.8 7"><g fill="#444"><rect x="3.500" y="0" width="6.200" height="0.800"/><rect x="2.200" y="3" width="7.500" height="0.800"/><rect x="3.500" y="6" width="4" height="0.800"/></g><path d="M2 1.700L0.400 3.400 2 5.100" fill="none" stroke="#444" stroke-width="0.800"/></svg><svg style="left:581.6px;top:324px;" width="11.6" height="3.4" viewBox="0 0 11.6 3.4"><g fill="none" stroke="#444" stroke-width="0.800"><circle cx="1.700" cy="1.700" r="1.250"/><circle cx="5.800" cy="1.700" r="1.250"/><circle cx="9.900" cy="1.700" r="1.250"/></g></svg><svg style="left:418.6px;top:400px;" width="5.2" height="11.2" viewBox="0 0 5.2 11.2"><g fill="none" stroke="#333" stroke-width="0.700"><path d="M0.200 0.300C1.500 0.300 2.500 0.900 2.600 1.800 2.700 0.900 3.700 0.300 5 0.300"/><path d="M0.200 10.900c1.300 0 2.300-0.600 2.400-1.500 0.100 0.900 1.100 1.500 2.400 1.500"/><path d="M2.600 1.800v7.600"/><path d="M1.800 5.800h1.600"/></g></svg><svg style="left:426px;top:400.4px;" width="5.4" height="5.2" viewBox="0 0 5.4 5.2"><path d="M0 0h5.300v1.900H3V3h2v1.400H3V5H0z" fill="#7d7d7d"/></svg><div class="a" style="left:198.5px;top:574px;width:70.6px;height:27.2px;background:#0f6cd0;border-radius:4.5px"></div><span class="t b" style="letter-spacing:-0.277px;left:211px;top:587.80px;transform:translateY(-50%);font-size:10.800px;color:#fff">Send</span><svg style="left:251.20000000000002px;top:586.3px;" width="8.4" height="4.2" viewBox="0 0 8.4 4.2"><path d="M0.3 0.3L4.20 3.90 8.10 0.3" fill="none" stroke="#e8f1fb" stroke-width="1"/></svg><div class="a" style="left:275.2px;top:574px;width:62px;height:27.2px;background:#fff;border:1px solid #ece9e7;border-radius:4.5px"></div><span class="t b" style="letter-spacing:-0.182px;left:287.6px;top:587.80px;transform:translateY(-50%);font-size:10.600px;color:#0f5fb8">Discard</span><div class="a" style="left:616px;top:119px;width:139px;height:2px;background:#1a7fd8"></div><span class="t b" style="left:627.6px;top:102.90px;transform:translateY(-50%) scaleX(0.9080);transform-origin:0 50%;font-size:11px;color:#1b1a19">Room Finder</span><svg style="left:735.3px;top:98.6px;" width="8.6" height="8.6" viewBox="0 0 8.6 8.6"><path d="M0.300 0.300l8 8M8.300 0.300l-8 8" stroke="#333" stroke-width="0.900" fill="none"/></svg><span class="t " style="left:766px;top:102.90px;transform:translateY(-50%) scaleX(0.9627);transform-origin:0 50%;font-size:11px;color:#555">Scheduler</span><span class="t lbl" style="left:627.6px;top:138.20px;transform:translateY(-50%) scaleX(0.9828);transform-origin:0 50%;">Building</span><span class="t " style="left:816px;top:139.60px;transform:translateY(-50%) scaleX(0.9386);transform-origin:0 50%;font-size:8.6px;color:#555">Clear filters</span><svg style="left:867.2px;top:135.8px;" width="8.8" height="4.4" viewBox="0 0 8.8 4.4"><path d="M0.3 0.3L4.40 4.10 8.50 0.3" fill="none" stroke="#c6c6c6" stroke-width="0.9"/></svg><span class="t val" style="left:630.8px;top:165.30px;transform:translateY(-50%) scaleX(0.9348);transform-origin:0 50%;">Building 1 (HQ)</span><svg style="left:864.9px;top:163.5px;" width="8.8" height="4.6" viewBox="0 0 8.8 4.6"><path d="M0.3 0.3L4.40 4.30 8.50 0.3" fill="none" stroke="#333" stroke-width="0.95"/></svg><div class="a" style="left:627.1px;top:175.2px;width:255.39999999999998px;height:1.5px;background:#edebe9"></div><span class="t lbl" style="left:627.6px;top:193.40px;transform:translateY(-50%) scaleX(0.9363);transform-origin:0 50%;">Type</span><span class="t val" style="left:630.4px;top:211.00px;transform:translateY(-50%) scaleX(0.9340);transform-origin:0 50%;">Conference room</span><svg style="left:867.4px;top:208.60000000000002px;" width="8.4" height="4.4" viewBox="0 0 8.4 4.4"><path d="M0.3 0.3L4.20 4.10 8.10 0.3" fill="none" stroke="#666" stroke-width="0.9"/></svg><div class="a" style="left:627.1px;top:220.6px;width:255.39999999999998px;height:1.5px;background:#edebe9"></div><span class="t lbl" style="left:627.6px;top:239.20px;transform:translateY(-50%) scaleX(0.9388);transform-origin:0 50%;">Capacity</span><span class="t lbl" style="left:710.6px;top:239.20px;transform:translateY(-50%) scaleX(0.9741);transform-origin:0 50%;">Floor</span><span class="t val" style="left:630.4px;top:257.40px;transform:translateY(-50%) scaleX(0.9052);transform-origin:0 50%;">Any</span><span class="t val" style="left:713.6px;top:257.40px;transform:translateY(-50%) scaleX(0.9052);transform-origin:0 50%;">Any</span><svg style="left:685.6px;top:250.5px;" width="5.6" height="13" viewBox="0 0 5.6 13"><g fill="none" stroke="#444" stroke-width="0.9"><path d="M0.400 3.200L2.800 0.800 5.200 3.200"/><path d="M0.400 9.800L2.800 12.200 5.200 9.800"/></g></svg><svg style="left:769.0px;top:250.5px;" width="5.6" height="13" viewBox="0 0 5.6 13"><g fill="none" stroke="#444" stroke-width="0.9"><path d="M0.400 3.200L2.800 0.800 5.200 3.200"/><path d="M0.400 9.800L2.800 12.200 5.200 9.800"/></g></svg><span class="t lbl" style="left:627.6px;top:285.00px;transform:translateY(-50%) scaleX(0.8953);transform-origin:0 50%;">Features</span><span class="t val" style="left:630.4px;top:302.40px;transform:translateY(-50%) scaleX(0.9363);transform-origin:0 50%;">No features available</span><svg style="left:867.4px;top:299.8px;" width="8.4" height="4.4" viewBox="0 0 8.4 4.4"><path d="M0.3 0.3L4.20 4.10 8.10 0.3" fill="none" stroke="#666" stroke-width="0.9"/></svg><div class="a" style="left:627.1px;top:312.2px;width:255.39999999999998px;height:1.5px;background:#edebe9"></div><div class="a" style="left:616px;top:315.6px;width:278px;height:1px;background:#edebe9"></div><span class="t b" style="left:628.1px;top:334.00px;transform:translateY(-50%) scaleX(0.9901);transform-origin:0 50%;font-size:10.3px;color:#1b1a19">Conference rooms in Building 1 (HQ)</span><svg style="left:627.7px;top:350.59999999999997px;" width="22.2" height="22.2" viewBox="0 0 22.2 22.2"><circle cx="11.1" cy="11.1" r="11.1" fill="#0f62d1"/><rect x="7.600" y="5" width="7.800" height="12.200" fill="#3f86e0" stroke="#fff" stroke-width="1"/><rect x="8.700" y="10.700" width="1.200" height="1" fill="#fff"/></svg><span class="t val" style="left:658.4px;top:355.40px;transform:translateY(-50%) scaleX(0.9132);transform-origin:0 50%;">Bed Room</span><svg style="left:658.8px;top:365.09999999999997px;" width="7.2" height="7.2" viewBox="0 0 7.2 7.2"><g fill="none" stroke="#2f8f35" stroke-width="0.850"><circle cx="3.600" cy="3.600" r="3.150"/><path d="M3.500 1.800v2h1.500"/></g></svg><span class="t " style="left:670px;top:368.80px;transform:translateY(-50%) scaleX(0.9173);transform-origin:0 50%;font-size:8.1px;color:#2f8f35">Available</span><div class="a" style="left:616px;top:377.9px;width:278px;height:31.8px;background:#e5eefa"></div><svg style="left:627.7px;top:382.59999999999997px;" width="22.2" height="22.2" viewBox="0 0 22.2 22.2"><circle cx="11.1" cy="11.1" r="11.1" fill="#0f62d1"/><rect x="7.600" y="5" width="7.800" height="12.200" fill="#3f86e0" stroke="#fff" stroke-width="1"/><rect x="8.700" y="10.700" width="1.200" height="1" fill="#fff"/></svg><span class="t val" style="left:658.4px;top:387.40px;transform:translateY(-50%) scaleX(0.9208);transform-origin:0 50%;">Board Room</span><svg style="left:658.8px;top:397.09999999999997px;" width="7.2" height="7.2" viewBox="0 0 7.2 7.2"><g fill="none" stroke="#2f8f35" stroke-width="0.850"><circle cx="3.600" cy="3.600" r="3.150"/><path d="M3.500 1.800v2h1.500"/></g></svg><span class="t " style="left:670px;top:400.80px;transform:translateY(-50%) scaleX(0.9173);transform-origin:0 50%;font-size:8.1px;color:#2f8f35">Available</span><svg style="left:704.7px;top:397.5px;" width="5.4" height="6.4" viewBox="0 0 5.4 6.4"><g fill="none" stroke="#777" stroke-width="0.750"><circle cx="2.700" cy="1.800" r="1.400"/><path d="M0.400 6.200c0-1.700 1-2.700 2.300-2.700s2.300 1 2.300 2.700"/></g></svg><span class="t " style="left:712.4px;top:400.80px;transform:translateY(-50%) scaleX(0.8430);transform-origin:0 50%;font-size:8.1px;color:#6f6f6f">12</span><svg style="left:725.6px;top:397.3px;" width="3.4" height="6.6" viewBox="0 0 3.4 6.6"><g fill="none" stroke="#777" stroke-width="0.700"><path d="M1.700 6.200C0.900 4.600 0.400 3.200 0.400 2.100a1.300 1.300 0 0 1 2.600 0c0 1.100-0.500 2.500-1.300 4.100z"/></g></svg><span class="t " style="left:731.9px;top:400.80px;transform:translateY(-50%) scaleX(0.9126);transform-origin:0 50%;font-size:8.1px;color:#6f6f6f">Seattle</span><svg style="left:627.7px;top:414.59999999999997px;" width="22.2" height="22.2" viewBox="0 0 22.2 22.2"><circle cx="11.1" cy="11.1" r="11.1" fill="#0f62d1"/><rect x="7.600" y="5" width="7.800" height="12.200" fill="#3f86e0" stroke="#fff" stroke-width="1"/><rect x="8.700" y="10.700" width="1.200" height="1" fill="#fff"/></svg><span class="t val" style="left:658.4px;top:419.40px;transform:translateY(-50%) scaleX(0.9630);transform-origin:0 50%;">Dev 1</span><svg style="left:658.8px;top:429.09999999999997px;" width="7.2" height="7.2" viewBox="0 0 7.2 7.2"><g fill="none" stroke="#2f8f35" stroke-width="0.850"><circle cx="3.600" cy="3.600" r="3.150"/><path d="M3.500 1.800v2h1.500"/></g></svg><span class="t " style="left:670px;top:432.80px;transform:translateY(-50%) scaleX(0.9173);transform-origin:0 50%;font-size:8.1px;color:#2f8f35">Available</span><svg style="left:704.7px;top:429.5px;" width="5.4" height="6.4" viewBox="0 0 5.4 6.4"><g fill="none" stroke="#777" stroke-width="0.750"><circle cx="2.700" cy="1.800" r="1.400"/><path d="M0.400 6.200c0-1.700 1-2.700 2.300-2.700s2.300 1 2.300 2.700"/></g></svg><span class="t " style="left:712.4px;top:432.80px;transform:translateY(-50%) scaleX(0.8430);transform-origin:0 50%;font-size:8.1px;color:#6f6f6f">12</span><svg style="left:725.6px;top:429.3px;" width="3.4" height="6.6" viewBox="0 0 3.4 6.6"><g fill="none" stroke="#777" stroke-width="0.700"><path d="M1.700 6.200C0.900 4.600 0.400 3.200 0.400 2.100a1.300 1.300 0 0 1 2.600 0c0 1.100-0.500 2.500-1.300 4.100z"/></g></svg><span class="t " style="left:731.9px;top:432.80px;transform:translateY(-50%) scaleX(0.9126);transform-origin:0 50%;font-size:8.1px;color:#6f6f6f">Seattle</span><svg style="left:627.7px;top:446.59999999999997px;" width="22.2" height="22.2" viewBox="0 0 22.2 22.2"><circle cx="11.1" cy="11.1" r="11.1" fill="#0f62d1"/><rect x="7.600" y="5" width="7.800" height="12.200" fill="#3f86e0" stroke="#fff" stroke-width="1"/><rect x="8.700" y="10.700" width="1.200" height="1" fill="#fff"/></svg><span class="t val" style="left:658.4px;top:451.40px;transform:translateY(-50%) scaleX(0.9700);transform-origin:0 50%;">Dev 2</span><svg style="left:658.8px;top:461.09999999999997px;" width="7.2" height="7.2" viewBox="0 0 7.2 7.2"><g fill="none" stroke="#2f8f35" stroke-width="0.850"><circle cx="3.600" cy="3.600" r="3.150"/><path d="M3.500 1.800v2h1.500"/></g></svg><span class="t " style="left:670px;top:464.80px;transform:translateY(-50%) scaleX(0.9173);transform-origin:0 50%;font-size:8.1px;color:#2f8f35">Available</span><svg style="left:704.7px;top:461.5px;" width="5.4" height="6.4" viewBox="0 0 5.4 6.4"><g fill="none" stroke="#777" stroke-width="0.750"><circle cx="2.700" cy="1.800" r="1.400"/><path d="M0.400 6.200c0-1.700 1-2.700 2.300-2.700s2.300 1 2.300 2.700"/></g></svg><span class="t " style="left:712.4px;top:464.80px;transform:translateY(-50%) scaleX(0.8430);transform-origin:0 50%;font-size:8.1px;color:#6f6f6f">12</span><svg style="left:725.6px;top:461.3px;" width="3.4" height="6.6" viewBox="0 0 3.4 6.6"><g fill="none" stroke="#777" stroke-width="0.700"><path d="M1.700 6.200C0.900 4.600 0.400 3.200 0.400 2.100a1.300 1.300 0 0 1 2.600 0c0 1.100-0.500 2.500-1.300 4.100z"/></g></svg><span class="t " style="left:731.9px;top:464.80px;transform:translateY(-50%) scaleX(0.9126);transform-origin:0 50%;font-size:8.1px;color:#6f6f6f">Seattle</span><svg style="left:627.7px;top:478.59999999999997px;" width="22.2" height="22.2" viewBox="0 0 22.2 22.2"><circle cx="11.1" cy="11.1" r="11.1" fill="#0f62d1"/><rect x="7.600" y="5" width="7.800" height="12.200" fill="#3f86e0" stroke="#fff" stroke-width="1"/><rect x="8.700" y="10.700" width="1.200" height="1" fill="#fff"/></svg><span class="t val" style="left:658.4px;top:483.40px;transform:translateY(-50%) scaleX(1.0921);transform-origin:0 50%;">dev5</span><svg style="left:658.8px;top:493.09999999999997px;" width="7.2" height="7.2" viewBox="0 0 7.2 7.2"><g fill="none" stroke="#2f8f35" stroke-width="0.850"><circle cx="3.600" cy="3.600" r="3.150"/><path d="M3.500 1.800v2h1.500"/></g></svg><span class="t " style="left:670px;top:496.80px;transform:translateY(-50%) scaleX(0.9173);transform-origin:0 50%;font-size:8.1px;color:#2f8f35">Available</span>
</div>
</body>
</html>
